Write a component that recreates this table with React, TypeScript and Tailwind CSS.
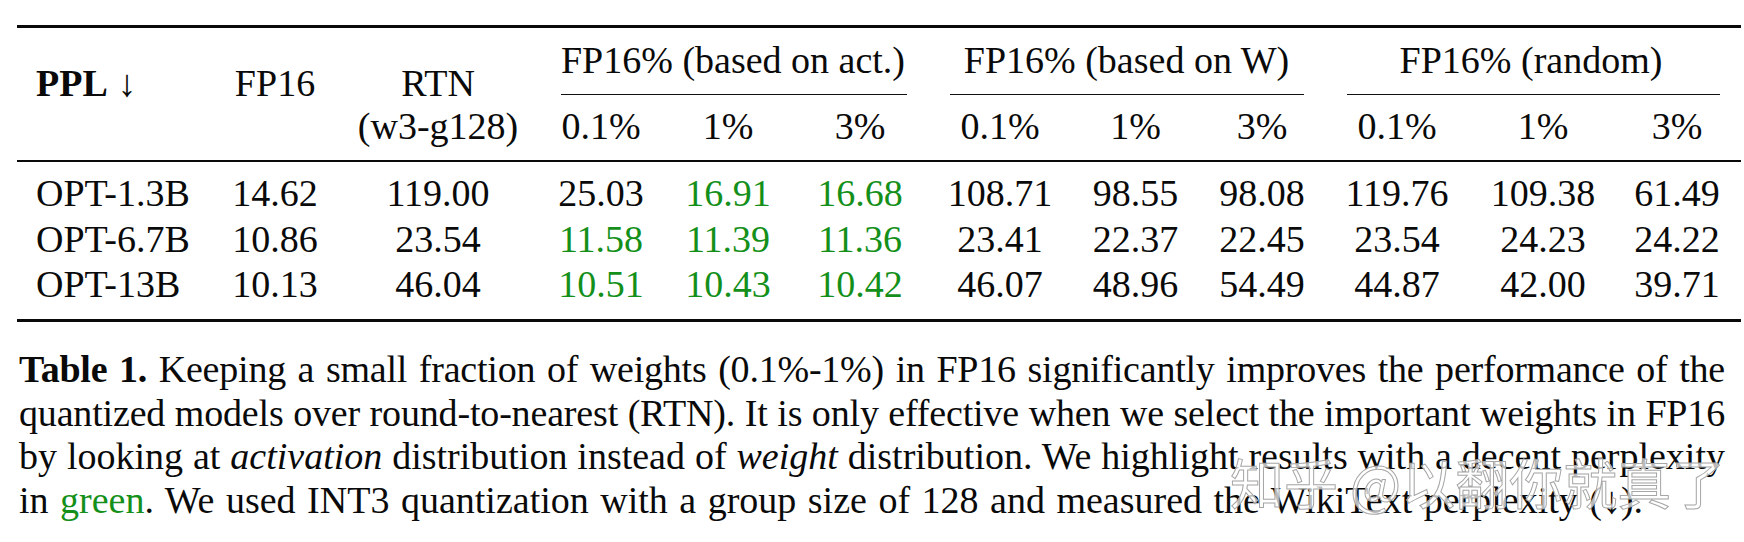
import type { ReactNode } from "react";

const cols =
  "grid grid-cols-[191px_134px_192px_134px_120px_144px_136px_135px_118px_152px_140px_128px]";

type Cell = { v: string; hi?: boolean };

const rows: { model: string; cells: Cell[] }[] = [
  {
    model: "OPT-1.3B",
    cells: [
      { v: "14.62" },
      { v: "119.00" },
      { v: "25.03" },
      { v: "16.91", hi: true },
      { v: "16.68", hi: true },
      { v: "108.71" },
      { v: "98.55" },
      { v: "98.08" },
      { v: "119.76" },
      { v: "109.38" },
      { v: "61.49" },
    ],
  },
  {
    model: "OPT-6.7B",
    cells: [
      { v: "10.86" },
      { v: "23.54" },
      { v: "11.58", hi: true },
      { v: "11.39", hi: true },
      { v: "11.36", hi: true },
      { v: "23.41" },
      { v: "22.37" },
      { v: "22.45" },
      { v: "23.54" },
      { v: "24.23" },
      { v: "24.22" },
    ],
  },
  {
    model: "OPT-13B",
    cells: [
      { v: "10.13" },
      { v: "46.04" },
      { v: "10.51", hi: true },
      { v: "10.43", hi: true },
      { v: "10.42", hi: true },
      { v: "46.07" },
      { v: "48.96" },
      { v: "54.49" },
      { v: "44.87" },
      { v: "42.00" },
      { v: "39.71" },
    ],
  },
];

const GroupHead = ({ title, rule }: { title: string; rule: string }) => (
  <div className="col-span-3 flex flex-col pt-[10px]">
    <div className="whitespace-nowrap text-center">{title}</div>
    <div className={`mt-[11px] h-[1.5px] bg-[#111] ${rule}`} />
  </div>
);

const Sub = ({ children }: { children: ReactNode }) => (
  <div className="flex justify-center whitespace-nowrap pt-[9px]">{children}</div>
);

// justified caption line; LaTeX squeezes a tight line a little
const Line = ({ children, className = "" }: { children: ReactNode; className?: string }) => (
  <div className={`whitespace-nowrap text-justify [text-align-last:justify] ${className}`}>{children}</div>
);

export default function App() {
  return (
    <div className="relative h-[542px] w-[1744px] overflow-hidden bg-white text-[#0a0a0a] [font-family:'Liberation_Serif','Times_New_Roman',serif]">
      {/* table */}
      <div className="ml-[17px] w-[1724px] pt-[25px] text-[38px]">
        <div className="h-[3px] bg-[#0a0a0a]" />

        <div className={`${cols} grid-rows-[67px_65px] leading-[45px]`}>
          <div className="row-span-2 whitespace-nowrap pl-[19px] pt-[33px]">
            <span className="font-bold">PPL</span> ↓
          </div>
          <div className="row-span-2 flex justify-center pt-[33px]">FP16</div>
          <div className="row-span-2 flex flex-col items-center pt-[34px] leading-[43px]">
            <span>RTN</span>
            <span className="whitespace-nowrap">(w3-g128)</span>
          </div>
          <GroupHead title="FP16% (based on act.)" rule="ml-[27px] mr-[25px]" />
          <GroupHead title="FP16% (based on W)" rule="ml-[18px] mr-[17px]" />
          <GroupHead title="FP16% (random)" rule="ml-[26px] mr-[21px]" />
          {["0.1%", "1%", "3%", "0.1%", "1%", "3%", "0.1%", "1%", "3%"].map((p, i) => (
            <Sub key={i}>{p}</Sub>
          ))}
        </div>

        <div className="h-[2px] bg-[#0a0a0a]" />

        <div className="pb-[11.5px] pt-[9px] leading-[45.5px]">
          {rows.map((r) => (
            <div key={r.model} className={cols}>
              <div className="whitespace-nowrap pl-[19px]">{r.model}</div>
              {r.cells.map((c, i) => (
                <div
                  key={i}
                  className={`flex justify-center whitespace-nowrap ${c.hi ? "text-[#14901a]" : ""}`}
                >
                  {c.v}
                </div>
              ))}
            </div>
          ))}
        </div>

        <div className="h-[3px] bg-[#0a0a0a]" />
      </div>

      {/* caption */}
      <div className="ml-[19px] mt-[26px] w-[1706px] text-[38px] leading-[43.5px]">
        <Line className="tracking-[-0.22px]">
          <span className="font-bold">Table 1.</span> Keeping a small fraction of weights (0.1%-1%) in FP16
          significantly improves the performance of the
        </Line>
        <Line className="tracking-[-0.17px]">
          quantized models over round-to-nearest (RTN). It is only effective when we select the important weights
          in FP16
        </Line>
        <Line>
          by looking at <i>activation</i> distribution instead of <i>weight</i> distribution. We highlight results
          with a decent perplexity
        </Line>
        <div className="whitespace-nowrap [word-spacing:2px]">
          in <span className="text-[#14901a]">green</span>. We used INT3 quantization with a group size of 128 and
          measured the WikiText perplexity (↓).
        </div>
      </div>

      {/* watermark */}
      <div className="absolute left-[1230px] top-[455px] whitespace-nowrap text-[54px] leading-none text-[rgba(255,255,255,0.72)] [font-family:'Noto_Sans_CJK_SC',sans-serif] [-webkit-text-stroke:1px_#a6a6a6]">
        知乎 @以翻你就真了
      </div>
    </div>
  );
}
